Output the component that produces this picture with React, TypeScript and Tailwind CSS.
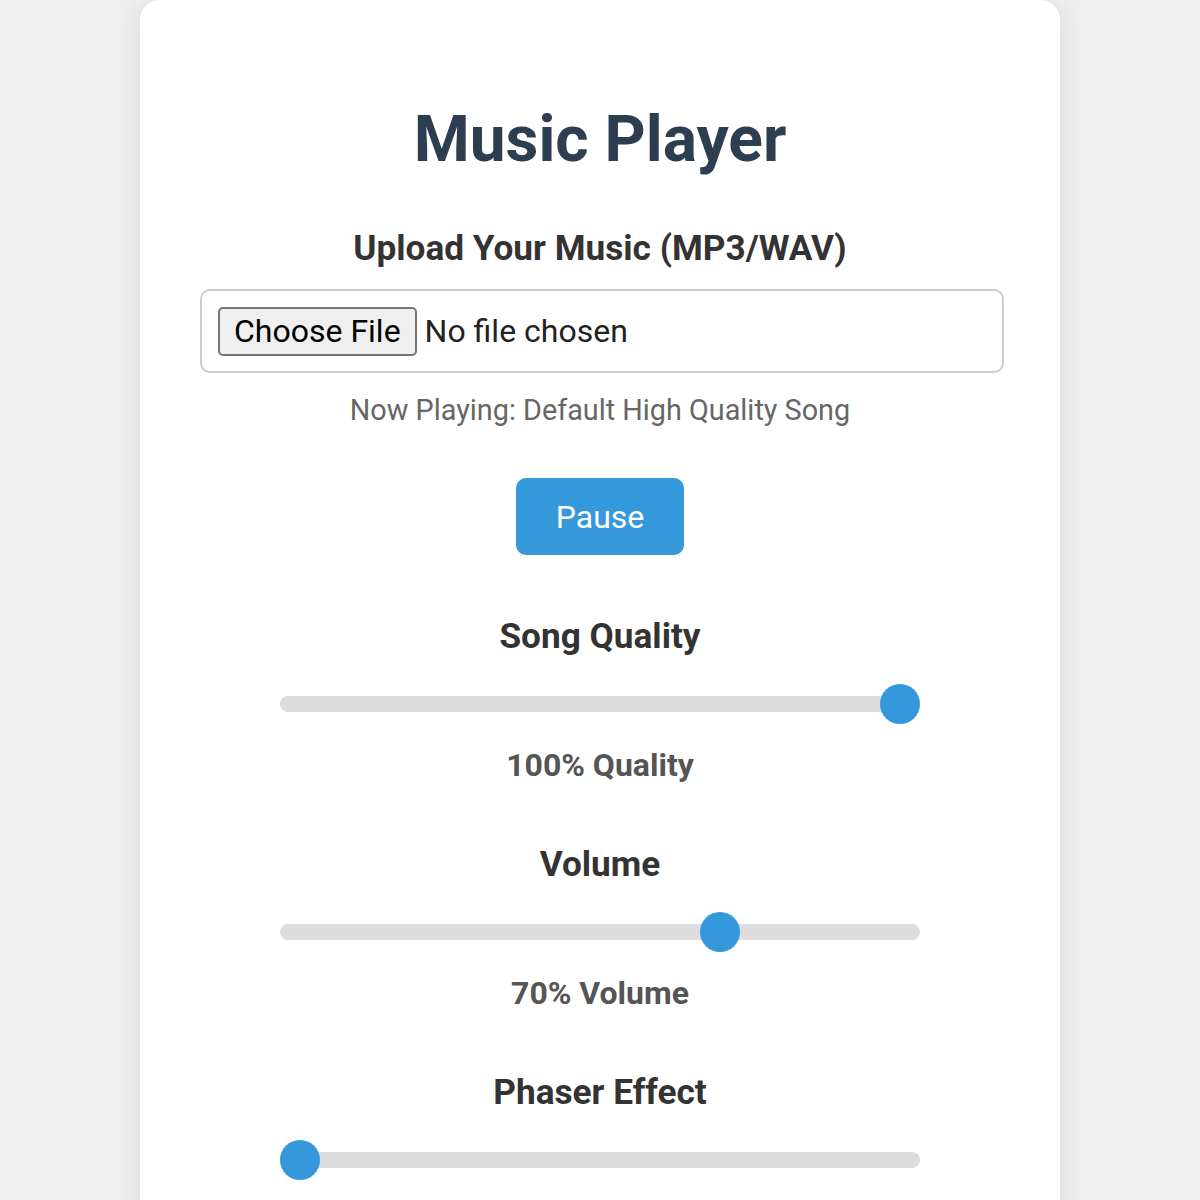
import React, { useState } from 'react';

// Simple range display: a grey track with a blue round thumb
interface SliderProps {
  value: number;
}

const Slider: React.FC<SliderProps> = ({ value }) => {
  return (
    <div className="relative mx-auto mt-[28px] h-[40px] w-[640px]">
      <div className="absolute left-0 right-0 top-[12px] h-[16px] rounded-full bg-[#dddddd]" />
      <div
        className="absolute top-0 h-[40px] w-[40px] rounded-full bg-[#3498db]"
        style={{ left: `${(value / 100) * 600}px` }}
      />
    </div>
  );
};

const Section: React.FC<{ title: string; value: number; caption?: string }> = ({ title, value, caption }) => (
  <div className="flex flex-col items-center">
    <h2 className="mt-[59px] text-[35.2px] leading-[40px] font-bold text-[#333333]">{title}</h2>
    <div className="w-full">
      <Slider value={value} />
    </div>
    {caption && (
      <p className="mt-[21px] text-[32px] leading-[40px] font-bold text-[#555555]">{caption}</p>
    )}
  </div>
);

export default function App() {
  const [playing, setPlaying] = useState(true);

  return (
    <div className="min-h-[1200px] bg-[#f0f0f0] font-['Roboto','Liberation_Sans',sans-serif]">
      <div className="mx-auto flex w-[920px] flex-col items-center rounded-[20px] bg-white px-[60px] pt-[108px] pb-[60px] text-center shadow-[0_0_30px_rgba(0,0,0,0.1)]">
        <h1 className="text-[64px] leading-[64px] font-bold text-[#2c3e50]">Music Player</h1>

        <label className="mt-[56px] text-[35.2px] leading-[40px] font-bold text-[#333333]">
          Upload Your Music (MP3/WAV)
        </label>

        {/* file picker box */}
        <label className="mt-[21px] flex h-[84px] w-[804px] cursor-pointer items-center self-start rounded-[10px] border-2 border-[#cccccc] px-[16px]">
          <span className="flex h-[49px] items-center rounded-[5px] border-2 border-[#767676] bg-[#efefef] px-[14px] text-[32px] text-black">
            Choose File
          </span>
          <span className="ml-[8px] text-[32px] text-[#222222]">No file chosen</span>
          <input type="file" accept="audio/mp3,audio/wav" className="hidden" />
        </label>

        <p className="mt-[17px] text-[28.8px] leading-[40px] text-[#666666]">Now Playing: Default High Quality Song</p>

        <button
          onClick={() => setPlaying(!playing)}
          className="mt-[48px] h-[77px] w-[168px] rounded-[10px] bg-[#3498db] text-[32px] text-white"
        >
          {playing ? 'Pause' : 'Play'}
        </button>

        <div className="mt-[2px] w-full">
          <Section title="Song Quality" value={100} caption="100% Quality" />
          <Section title="Volume" value={70} caption="70% Volume" />
          <Section title="Phaser Effect" value={0} />
        </div>
      </div>
    </div>
  );
}
